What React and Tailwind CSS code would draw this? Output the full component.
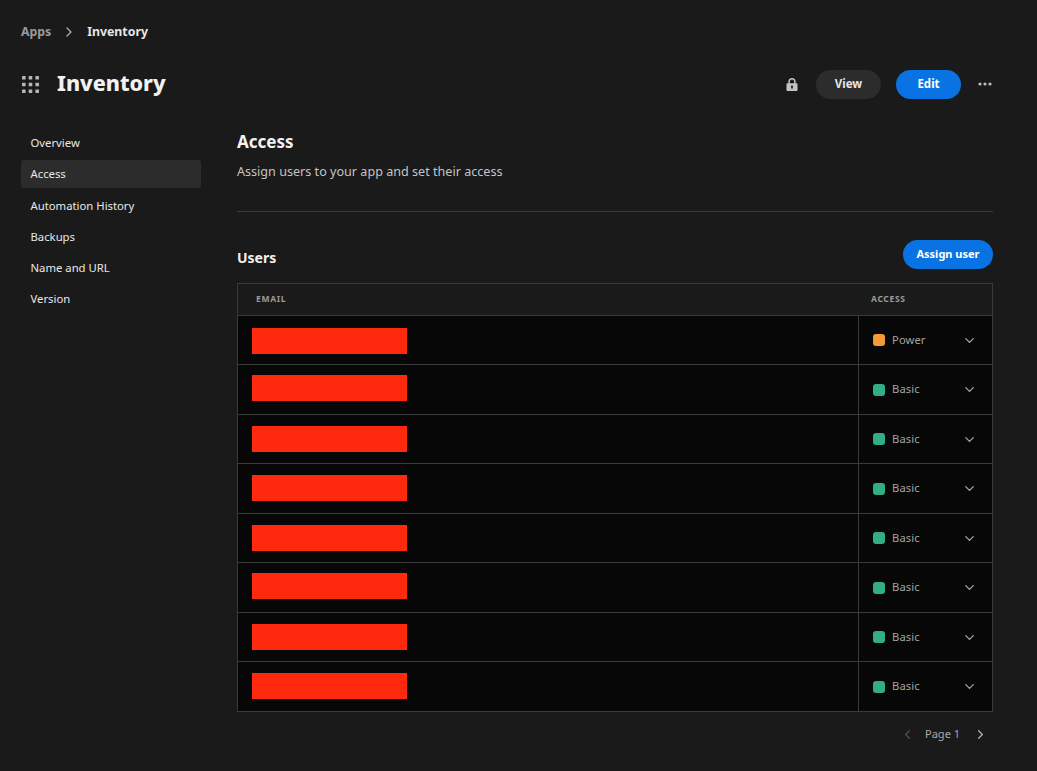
import React from "react";
import { ChevronRight, ChevronLeft, ChevronDown } from "lucide-react";

const font = "font-['Noto_Sans','Open_Sans',sans-serif]";

const rows = [
  { role: "Power", dot: "bg-[#f59a35]", h: "h-[49px]", bar: "mt-[12px]" },
  { role: "Basic", dot: "bg-[#33ad86]", h: "h-[50px]", bar: "mt-[10px]" },
  { role: "Basic", dot: "bg-[#33ad86]", h: "h-[49px]", bar: "mt-[11px]" },
  { role: "Basic", dot: "bg-[#33ad86]", h: "h-[50px]", bar: "mt-[11px]" },
  { role: "Basic", dot: "bg-[#33ad86]", h: "h-[49px]", bar: "mt-[11px]" },
  { role: "Basic", dot: "bg-[#33ad86]", h: "h-[50px]", bar: "mt-[10px]" },
  { role: "Basic", dot: "bg-[#33ad86]", h: "h-[49px]", bar: "mt-[11px]" },
  { role: "Basic", dot: "bg-[#33ad86]", h: "h-[50px]", bar: "mt-[11px]" },
];

const nav = [
  { label: "Overview", cls: "h-[28px] mb-[3px]" },
  { label: "Access", cls: "h-[28px] mb-[4px] bg-[#2c2c2c]" },
  { label: "Automation History", cls: "h-[28px] mb-[3px]" },
  { label: "Backups", cls: "h-[28px] mb-[3px]" },
  { label: "Name and URL", cls: "h-[28px] mb-[3px]" },
  { label: "Version", cls: "h-[28px]" },
];

function GridIcon() {
  return (
    <svg className="ml-[1px]" width="17" height="17" viewBox="0 0 17 17" fill="#b5b5b5">
      {[0, 6.7, 13.4].map((y) =>
        [0, 6.7, 13.4].map((x) => <rect key={`${x}-${y}`} x={x} y={y} width="3.6" height="3.6" rx="0.4" />)
      )}
    </svg>
  );
}

function LockIcon() {
  return (
    <svg width="12" height="13" viewBox="0 0 12 13">
      <path
        fill="#c4c4c4"
        fillRule="evenodd"
        d="M6 0a3.6 3.6 0 0 0-3.6 3.6V5.2H1.4a.9.9 0 0 0-.9.9v6a.9.9 0 0 0 .9.9h9.2a.9.9 0 0 0 .9-.9v-6a.9.9 0 0 0-.9-.9H9.6V3.6A3.6 3.6 0 0 0 6 0Zm2.1 5.2H3.9V3.6a2.1 2.1 0 0 1 4.2 0v1.6ZM6 7.6a1.2 1.2 0 0 1 .6 2.2v1H5.4v-1A1.2 1.2 0 0 1 6 7.6Z"
      />
    </svg>
  );
}

export default function App() {
  return (
    <div className={`${font} w-[1037px] h-[771px] overflow-hidden bg-[#1a1a1a] text-white px-[21px]`}>
      <div className="flex items-center h-[20px] mt-[22px] text-[12.3px] font-bold">
        <span className="text-[#9a9a9a]">Apps</span>
        <ChevronRight size={16} strokeWidth={2} className="text-[#a8a8a8] ml-[10px] mr-[10px]" />
        <span className="text-[#e6e6e6]">Inventory</span>
      </div>

      <div className="flex items-center h-[30px] mt-[27px] pr-[24px]">
        <GridIcon />
        <h1 className="ml-[18px] -mt-[3px] text-[21.5px] leading-[30px] font-extrabold text-[#f2f2f2]">Inventory</h1>
        <div className="ml-auto flex items-center">
          <LockIcon />
          <button className="ml-[18px] w-[65px] h-[29px] rounded-full bg-[#2c2c2c] text-[11.5px] font-bold text-[#e6e6e6]">View</button>
          <button className="ml-[15px] w-[65px] h-[29px] rounded-full bg-[#0a73e3] text-[11.5px] font-bold text-white">Edit</button>
          <svg className="ml-[17px]" width="14" height="4" viewBox="0 0 14 4" fill="#bdbdbd">
            <circle cx="2" cy="2" r="1.6" />
            <circle cx="7" cy="2" r="1.6" />
            <circle cx="12" cy="2" r="1.6" />
          </svg>
        </div>
      </div>

      <div className="flex mt-[29px]">
        <nav className="w-[180px] shrink-0 mt-[1px]">
          {nav.map((n) => (
            <div key={n.label} className={`${n.cls} flex items-center px-[9.5px] rounded-[3px] text-[11.3px] text-[#e8e8e8]`}>
              {n.label}
            </div>
          ))}
        </nav>

        <main className="ml-[36px] w-[756px] pt-[2px]">
          <h2 className="text-[17px] leading-[24px] font-bold text-[#f2f2f2]">Access</h2>
          <p className="mt-[9px] text-[12.6px] leading-[18px] text-[#c4c4c4]">Assign users to your app and set their access</p>
          <div className="mt-[30px] border-t border-[#3a3a3a]" />

          <div className="flex items-center justify-between mt-[28px] h-[29px]">
            <h3 className="mt-[5px] text-[14px] font-bold text-[#f0f0f0]">Users</h3>
            <button className="w-[90px] h-[29px] rounded-full bg-[#0a73e3] text-[11px] font-bold text-white">Assign user</button>
          </div>

          <div className="mt-[14px] border border-[#3a3a3a]">
            <div className="flex items-center h-[31px] text-[8.5px] font-bold tracking-[0.08em] text-[#9a9a9a]">
              <div className="flex-1 pl-[18px]">EMAIL</div>
              <div className="w-[134px] pl-[13px]">ACCESS</div>
            </div>
            {rows.map((r, i) => (
              <div key={i} className={`${r.h} flex bg-[#070707] border-t border-[#3a3a3a]`}>
                <div className="flex-1 pl-[14px]">
                  <div className={`${r.bar} w-[155px] h-[26px] bg-[#ff2a0d]`} />
                </div>
                <div className="w-[134px] flex items-center border-l border-[#3a3a3a] pl-[14px] pr-[15px]">
                  <span className={`${r.dot} w-[12px] h-[12px] rounded-[3px]`} />
                  <span className="ml-[7px] text-[11.2px] tracking-[0.01em] text-[#a3a3a3]">{r.role}</span>
                  <ChevronDown size={15} strokeWidth={2} className="ml-auto text-[#a8a8a8]" />
                </div>
              </div>
            ))}
          </div>

          <div className="flex items-center justify-end h-[18px] mt-[13px] pr-[5px] text-[11px] text-[#a8a8a8]">
            <ChevronLeft size={15} strokeWidth={2} className="text-[#4e4e4e]" />
            <span className="ml-[10px] mr-[13px]">Page 1</span>
            <ChevronRight size={15} strokeWidth={2} className="text-[#b0b0b0]" />
          </div>
        </main>
      </div>
    </div>
  );
}
